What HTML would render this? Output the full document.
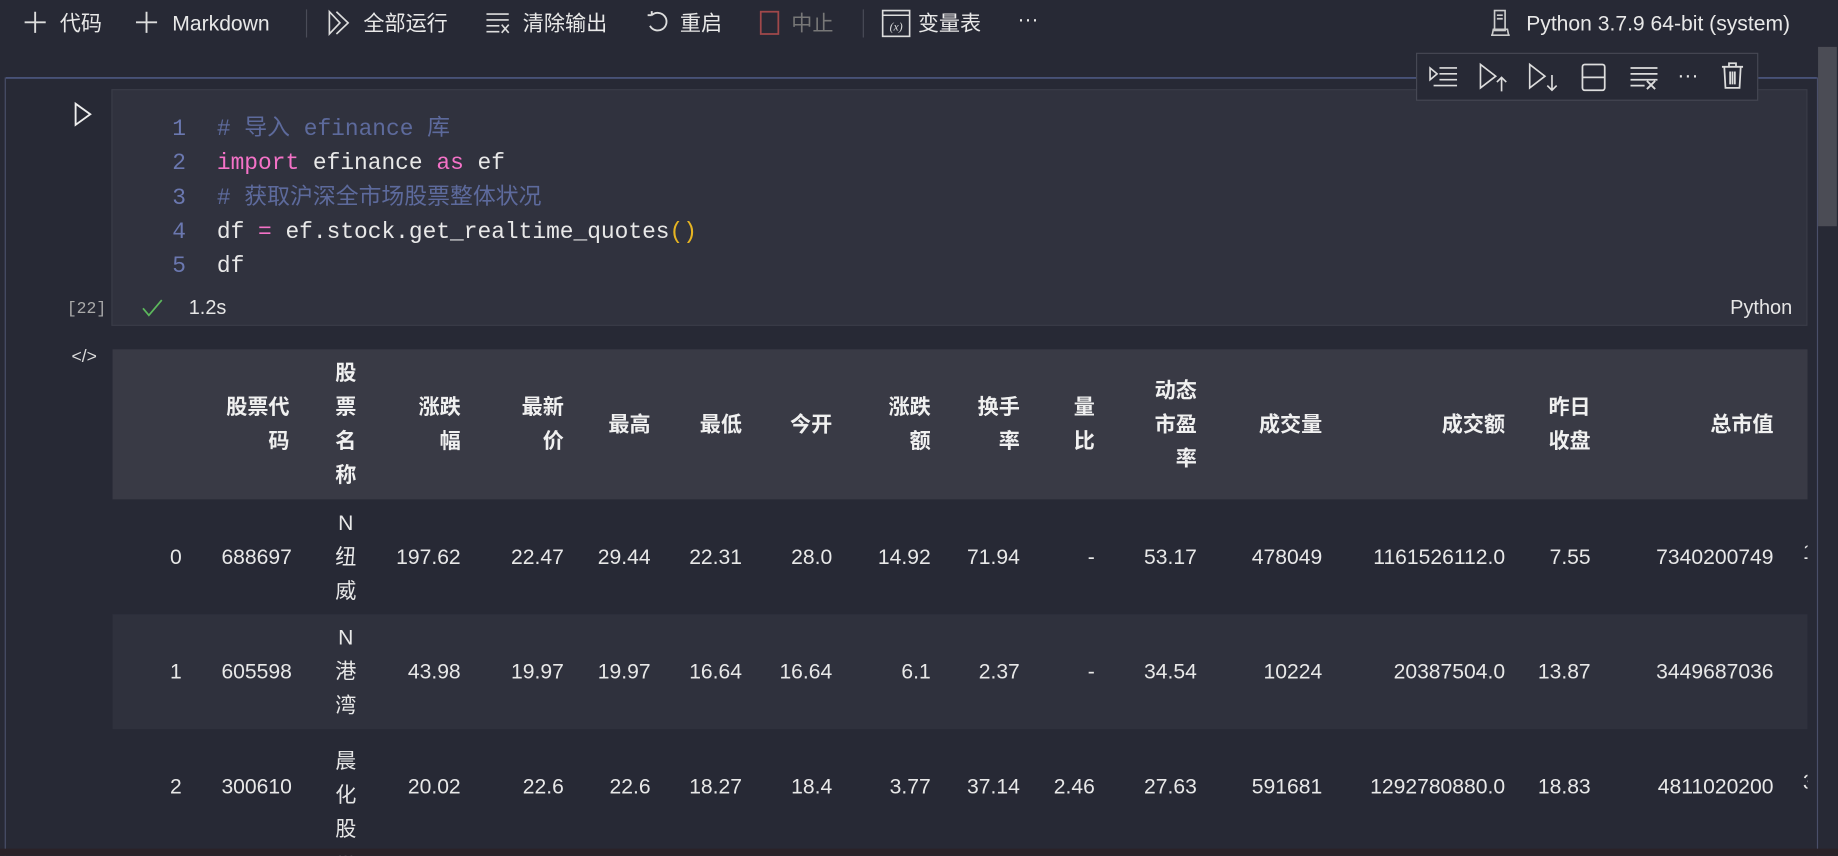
<!DOCTYPE html>
<html><head><meta charset="utf-8"><style>
html,body{margin:0;padding:0;width:1838px;height:856px;overflow:hidden;background:#272935;}
#w{position:absolute;left:0;top:0;width:1568px;height:730px;transform:scale(1.17219);transform-origin:0 0;background:#272935;font-family:"Liberation Sans","Noto Sans CJK SC",sans-serif;color:#e6e6e6;font-size:18px;overflow:hidden}
.a{position:absolute;white-space:nowrap;}
.tb{top:7px;font-size:18px;line-height:26px;color:#e8e8e8}
.code{font-family:"Liberation Mono","Noto Sans CJK SC",monospace;font-size:19.5px;line-height:29.3px;}
.hc{position:absolute;top:298px;height:128px;display:flex;align-items:center;justify-content:flex-end;text-align:right;font-weight:bold;line-height:29px;font-size:18px;color:#f0f0f0}
.rc{position:absolute;height:98px;display:flex;align-items:center;justify-content:flex-end;text-align:right;line-height:29px;font-size:18px;color:#e8e8e8}
.nm{justify-content:center;text-align:center;width:30px}
svg{position:absolute;overflow:visible}
</style></head><body><div id="w">
<!-- toolbar -->
<svg style="left:20px;top:9px" width="20" height="20"><path d="M10 1V19M1 10H19" stroke="#ddd" stroke-width="1.6"/></svg>
<div class="a tb" style="left:51px">代码</div>
<svg style="left:115px;top:9px" width="20" height="20"><path d="M10 1V19M1 10H19" stroke="#ddd" stroke-width="1.6"/></svg>
<div class="a tb" style="left:147px">Markdown</div>
<div class="a" style="left:261px;top:8px;width:1px;height:24px;background:#4a4c58"></div>
<svg style="left:280px;top:9px" width="22" height="22"><path d="M1 1V20L10 10.5Z M7 1L17 10.5L7 20" fill="none" stroke="#ddd" stroke-width="1.4"/></svg>
<div class="a tb" style="left:310px">全部运行</div>
<svg style="left:414px;top:10px" width="22" height="20"><path d="M1 2H20M1 7H20M1 12H12M1 17H12M14 11L20 18M20 11L14 18" stroke="#ddd" stroke-width="1.4" fill="none"/></svg>
<div class="a tb" style="left:446px">清除输出</div>
<svg style="left:551px;top:9px" width="20" height="20"><path d="M5 4A7.5 7.5 0 1 1 3.5 13M5 4V0.5M5 4H1.5" stroke="#ddd" stroke-width="1.6" fill="none"/></svg>
<div class="a tb" style="left:580px">重启</div>
<svg style="left:648px;top:9px" width="18" height="22"><rect x="1" y="1" width="15" height="19" fill="none" stroke="#a0484a" stroke-width="1.5"/></svg>
<div class="a tb" style="left:675px;color:#777">中止</div>
<div class="a" style="left:736px;top:8px;width:1px;height:24px;background:#4a4c58"></div>
<svg style="left:752px;top:8px" width="26" height="24"><rect x="1" y="1" width="23" height="22" fill="none" stroke="#ddd" stroke-width="1.4"/><path d="M1 5H24" stroke="#ddd" stroke-width="1.2"/><text x="12.5" y="18" font-size="10" fill="#ddd" text-anchor="middle" font-family="Liberation Serif" font-style="italic">(x)</text></svg>
<div class="a tb" style="left:783px">变量表</div>
<div class="a tb" style="left:868px;top:3px">···</div>
<svg style="left:1270px;top:8px" width="20" height="24"><rect x="5" y="1" width="9" height="17" fill="none" stroke="#ccc" stroke-width="1.4"/><path d="M7 5H12M7 8H12M2 22H18M3 22L4 17H16L17 22" stroke="#ccc" stroke-width="1.4" fill="none"/></svg>
<div class="a tb" style="left:1302px">Python 3.7.9 64-bit (system)</div>
<!-- scrollbar -->
<div class="a" style="left:1551px;top:40px;width:16px;height:153px;background:#4b4c55"></div>
<!-- cell outline -->
<div class="a" style="left:5px;top:66px;width:1545px;height:1px;background:#5b6aa0"></div>
<div class="a" style="left:4px;top:66px;width:1px;height:664px;background:#4a4f6a"></div>
<div class="a" style="left:1550px;top:66px;width:1px;height:664px;background:#4a4f6a"></div>
<!-- code cell -->
<div class="a" style="left:95px;top:76px;width:1447px;height:202px;background:#30323e;border:1px solid #3a3c48;box-sizing:border-box"></div>
<svg style="left:63px;top:87px" width="16" height="22"><path d="M1.5 1.5V19.5L14 10.5Z" fill="none" stroke="#eee" stroke-width="1.6"/></svg>
<div class="a code" style="left:147px;top:96px;color:#6b78b0">1<br>2<br>3<br>4<br>5</div>
<div class="a code" style="left:185px;top:96px;color:#e8e8e8"><span style="color:#5d6a9c"># 导入 efinance 库</span><br><span style="color:#f472c7">import</span> efinance <span style="color:#f472c7">as</span> ef<br><span style="color:#5d6a9c"># 获取沪深全市场股票整体状况</span><br>df <span style="color:#f472c7">=</span> ef.stock.get_realtime_quotes<span style="color:#e6b422">()</span><br>df</div>
<div class="a" style="left:57px;top:256px;font-size:14px;color:#aaa;font-family:'Liberation Mono',monospace">[22]</div>
<svg style="left:121px;top:255px" width="18" height="16"><path d="M1 8L6 14L17 1" fill="none" stroke="#5cb85c" stroke-width="1.5"/></svg>
<div class="a" style="left:161px;top:253px;font-size:17px">1.2s</div>
<div class="a" style="left:1476px;top:253px;font-size:17px">Python</div>
<!-- floating toolbar -->
<div class="a" style="left:1208px;top:45px;width:292px;height:41px;background:#272935;border:1px solid #464854;box-sizing:border-box"></div>
<svg style="left:1219px;top:55px" width="26" height="22"><path d="M1 3V13L7 8Z" fill="none" stroke="#ddd" stroke-width="1.4"/><path d="M9 3H24M9 8H24M9 13H24M4 18H24" stroke="#ddd" stroke-width="1.4"/></svg>
<svg style="left:1262px;top:54px" width="26" height="26"><path d="M1 1V21L14 11Z" fill="none" stroke="#ddd" stroke-width="1.4"/><path d="M19 24V12M15 16L19 12L23 16" fill="none" stroke="#ddd" stroke-width="1.4"/></svg>
<svg style="left:1304px;top:54px" width="26" height="26"><path d="M1 1V21L14 11Z" fill="none" stroke="#ddd" stroke-width="1.4"/><path d="M20 10V23M16 19L20 23L24 19" fill="none" stroke="#ddd" stroke-width="1.4"/></svg>
<svg style="left:1349px;top:54px" width="22" height="24"><rect x="1" y="1" width="19" height="22" rx="2" fill="none" stroke="#ddd" stroke-width="1.5"/><path d="M1 12H20" stroke="#ddd" stroke-width="1.5"/></svg>
<svg style="left:1390px;top:56px" width="26" height="22"><path d="M1 2H24M1 7H24M1 12H24M1 17H13" stroke="#ddd" stroke-width="1.5"/><path d="M15 13L22 20M22 13L15 20" stroke="#ddd" stroke-width="1.6"/></svg>
<div class="a" style="left:1431px;top:54px;font-size:18px">···</div>
<svg style="left:1468px;top:53px" width="22" height="24"><path d="M1 4H19M7 4V1H13V4M3 4L4 22H16L17 4M8 8V19M10 8V19M12 8V19" fill="none" stroke="#ddd" stroke-width="1.5"/></svg>
<!-- output -->
<div class="a" style="left:61px;top:296px;font-size:15px;color:#ddd">&lt;/&gt;</div>
<div class="a" style="left:96px;top:298px;width:1446px;height:128px;background:#393a45"></div>
<div class="a" style="left:96px;top:524px;width:1446px;height:98px;background:#2f313d"></div>
<!-- headers -->
<div class="hc" style="right:1321px">股票代<br>码</div>
<div class="hc nm" style="left:280px;justify-content:center;text-align:center">股<br>票<br>名<br>称</div>
<div class="hc" style="right:1175px">涨跌<br>幅</div>
<div class="hc" style="right:1087px">最新<br>价</div>
<div class="hc" style="right:1013px">最高</div>
<div class="hc" style="right:935px">最低</div>
<div class="hc" style="right:858px">今开</div>
<div class="hc" style="right:774px">涨跌<br>额</div>
<div class="hc" style="right:698px">换手<br>率</div>
<div class="hc" style="right:634px">量<br>比</div>
<div class="hc" style="right:547px">动态<br>市盈<br>率</div>
<div class="hc" style="right:440px">成交量</div>
<div class="hc" style="right:284px">成交额</div>
<div class="hc" style="right:211px">昨日<br>收盘</div>
<div class="hc" style="right:55px">总市值</div>
<!-- row 0 -->
<div class="rc" style="top:426px;right:1413px">0</div>
<div class="rc" style="top:426px;right:1319px">688697</div>
<div class="rc nm" style="top:426px;left:280px">N<br>纽<br>威</div>
<div class="rc" style="top:426px;right:1175px">197.62</div>
<div class="rc" style="top:426px;right:1087px">22.47</div>
<div class="rc" style="top:426px;right:1013px">29.44</div>
<div class="rc" style="top:426px;right:935px">22.31</div>
<div class="rc" style="top:426px;right:858px">28.0</div>
<div class="rc" style="top:426px;right:774px">14.92</div>
<div class="rc" style="top:426px;right:698px">71.94</div>
<div class="rc" style="top:426px;right:634px">-</div>
<div class="rc" style="top:426px;right:547px">53.17</div>
<div class="rc" style="top:426px;right:440px">478049</div>
<div class="rc" style="top:426px;right:284px">1161526112.0</div>
<div class="rc" style="top:426px;right:211px">7.55</div>
<div class="rc" style="top:426px;right:55px">7340200749</div>
<div class="a" style="top:461px;left:1538px;width:4px;overflow:hidden">1</div>
<!-- row 1 -->
<div class="rc" style="top:524px;right:1413px">1</div>
<div class="rc" style="top:524px;right:1319px">605598</div>
<div class="rc nm" style="top:524px;left:280px">N<br>港<br>湾</div>
<div class="rc" style="top:524px;right:1175px">43.98</div>
<div class="rc" style="top:524px;right:1087px">19.97</div>
<div class="rc" style="top:524px;right:1013px">19.97</div>
<div class="rc" style="top:524px;right:935px">16.64</div>
<div class="rc" style="top:524px;right:858px">16.64</div>
<div class="rc" style="top:524px;right:774px">6.1</div>
<div class="rc" style="top:524px;right:698px">2.37</div>
<div class="rc" style="top:524px;right:634px">-</div>
<div class="rc" style="top:524px;right:547px">34.54</div>
<div class="rc" style="top:524px;right:440px">10224</div>
<div class="rc" style="top:524px;right:284px">20387504.0</div>
<div class="rc" style="top:524px;right:211px">13.87</div>
<div class="rc" style="top:524px;right:55px">3449687036</div>
<!-- row 2 -->
<div class="rc" style="top:622px;right:1413px">2</div>
<div class="rc" style="top:622px;right:1319px">300610</div>
<div class="a" style="top:635px;left:280px;width:30px;text-align:center;line-height:29px;overflow:hidden;height:95px">晨<br>化<br>股<br>份</div>
<div class="rc" style="top:622px;right:1175px">20.02</div>
<div class="rc" style="top:622px;right:1087px">22.6</div>
<div class="rc" style="top:622px;right:1013px">22.6</div>
<div class="rc" style="top:622px;right:935px">18.27</div>
<div class="rc" style="top:622px;right:858px">18.4</div>
<div class="rc" style="top:622px;right:774px">3.77</div>
<div class="rc" style="top:622px;right:698px">37.14</div>
<div class="rc" style="top:622px;right:634px">2.46</div>
<div class="rc" style="top:622px;right:547px">27.63</div>
<div class="rc" style="top:622px;right:440px">591681</div>
<div class="rc" style="top:622px;right:284px">1292780880.0</div>
<div class="rc" style="top:622px;right:211px">18.83</div>
<div class="rc" style="top:622px;right:55px">4811020200</div>
<div class="a" style="top:657px;left:1538px;width:4px;overflow:hidden">3</div>
<div class="a" style="left:0;top:724px;width:1568px;height:6px;background:#2a2228"></div>
</div></body></html>
